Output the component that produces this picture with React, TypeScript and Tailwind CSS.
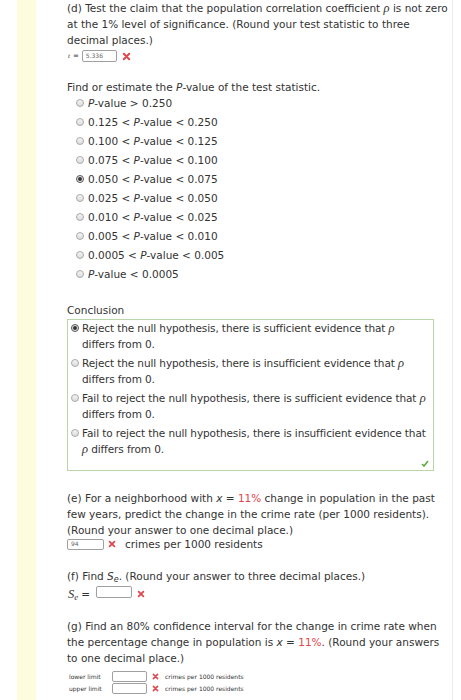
import React from "react";

const F = { fontFamily: '"DejaVu Sans", Verdana, sans-serif' };

function Radio({ checked }: { checked?: boolean }) {
  return checked ? (
    <span className="inline-flex h-[8px] w-[8px] shrink-0 items-center justify-center rounded-full border border-[#555] bg-[#e8e8e8]">
      <span className="h-[4px] w-[4px] rounded-full bg-[#333]" />
    </span>
  ) : (
    <span className="inline-block h-[8px] w-[8px] shrink-0 rounded-full border border-[#a9a9a9] bg-gradient-to-b from-[#f4f4f4] to-[#dcdcdc]" />
  );
}

function XMark({ size = 9 }: { size?: number }) {
  return (
    <svg width={size} height={size} viewBox="0 0 10 10" className="block shrink-0">
      <path d="M2 2 L8 8 M8 2 L2 8" stroke="#e0464b" strokeWidth="2.2" strokeLinecap="round" />
    </svg>
  );
}

function Rho() {
  return <span className="italic leading-none" style={{ fontFamily: '"Liberation Serif", serif', fontSize: "12.5px" }}>ρ</span>;
}

function P() {
  return <span className="italic">P</span>;
}

function Box({ w, val, h = 12 }: { w: number; val?: string; h?: number }) {
  return (
    <span
      className="inline-flex shrink-0 items-center rounded-[2px] border border-[#a0a0a0] bg-white pl-[3px] text-[6px] leading-none text-[#666]"
      style={{ width: w, height: h }}
    >
      {val}
    </span>
  );
}

const options: React.ReactNode[] = [
  <><P />-value &gt; 0.250</>,
  <>0.125 &lt; <P />-value &lt; 0.250</>,
  <>0.100 &lt; <P />-value &lt; 0.125</>,
  <>0.075 &lt; <P />-value &lt; 0.100</>,
  <>0.050 &lt; <P />-value &lt; 0.075</>,
  <>0.025 &lt; <P />-value &lt; 0.050</>,
  <>0.010 &lt; <P />-value &lt; 0.025</>,
  <>0.005 &lt; <P />-value &lt; 0.010</>,
  <>0.0005 &lt; <P />-value &lt; 0.005</>,
  <><P />-value &lt; 0.0005</>,
];

const conclusions: [React.ReactNode, React.ReactNode][] = [
  [<>Reject the null hypothesis, there is sufficient evidence that <Rho /></>, <>differs from 0.</>],
  [<>Reject the null hypothesis, there is insufficient evidence that <Rho /></>, <>differs from 0.</>],
  [<>Fail to reject the null hypothesis, there is sufficient evidence that <Rho /></>, <>differs from 0.</>],
  [<>Fail to reject the null hypothesis, there is insufficient evidence that</>, <><Rho /> differs from 0.</>],
];

export default function App() {
  return (
    <div className="flex h-[700px] w-[461px] overflow-hidden bg-white text-[10.5px] leading-[16px] text-[#333]" style={F}>
      <div className="w-[17px] shrink-0" />
      <div className="w-[19px] shrink-0 bg-[#fdfdde]" />
      <div className="w-[417px] shrink-0 border-r border-[#ececec] pl-[31px] pr-[4px]">
        <p>
          (d) Test the claim that the population correlation coefficient <Rho /> is not zero at the 1% level of significance. (Round your test statistic to three decimal places.)
        </p>
        <div className="mt-[2px] flex h-[12px] items-center gap-[3px] pl-[1px] text-[7px] leading-none">
          <span className="italic" style={{ fontFamily: '"Liberation Serif", serif' }}>t</span>
          <span>=</span>
          <Box w={35} val="5.336" />
          <span className="ml-[2px]"><XMark /></span>
        </div>

        <p className="mt-[17px]">Find or estimate the <P />-value of the test statistic.</p>
        <div className="flex flex-col gap-[3px] pl-[9px]">
          {options.map((o, i) => (
            <div key={i} className="flex h-[16px] items-center gap-[4px]">
              <Radio checked={i === 4} />
              <span>{o}</span>
            </div>
          ))}
        </div>

        <p className="mt-[20px]">Conclusion</p>
        <div className="relative mr-[14px] mt-[1px] flex flex-col gap-[3px] border border-[#b9d6a8] pb-[13px] pl-[3px]">
          {conclusions.map(([a, b], i) => (
            <div key={i} className="flex gap-[3px]">
              <span className="flex h-[16px] items-center"><Radio checked={i === 0} /></span>
              <span className="flex flex-col whitespace-nowrap tracking-[-0.1px]">
                <span>{a}</span>
                <span>{b}</span>
              </span>
            </div>
          ))}
          <svg width="8" height="7" viewBox="0 0 8 7" className="absolute bottom-[3px] right-[4px]">
            <path d="M1 4 L3 6 L7 1" stroke="#5cab3c" strokeWidth="1.6" fill="none" />
          </svg>
        </div>

        <p className="mt-[19px]">
          (e) For a neighborhood with <span className="italic">x</span> = <span className="text-[#e0464b]">11%</span> change in population in the past few years, predict the change in the crime rate (per 1000 residents). (Round your answer to one decimal place.)
        </p>
        <div className="flex h-[12px] items-center">
          <Box w={37} val="94" h={11} />
          <span className="ml-[4px]"><XMark size={8} /></span>
          <span className="ml-[9px]">crimes per 1000 residents</span>
        </div>

        <p className="mt-[18px]">
          (f) Find <span className="italic">S<sub className="text-[8px] leading-none">e</sub></span>. (Round your answer to three decimal places.)
        </p>
        <div className="mt-[2px] flex h-[16px] items-center">
          <span className="pl-[1px] italic text-[12.5px] leading-none" style={{ fontFamily: '"Liberation Serif", serif' }}>S<sub className="text-[9px] leading-none">e</sub></span>
          <span className="ml-[3px]">=</span>
          <span className="ml-[6px]"><Box w={36} h={12} /></span>
          <span className="ml-[5px]"><XMark size={8} /></span>
        </div>

        <p className="mt-[16px]">
          (g) Find an 80% confidence interval for the change in crime rate when the percentage change in population is <span className="italic">x</span> = <span className="text-[#e0464b]">11%</span>. (Round your answers to one decimal place.)
        </p>
        <div className="mt-[5px] flex flex-col gap-[1px] text-[6px] leading-none">
          {["lower limit", "upper limit"].map((l) => (
            <div key={l} className="flex h-[11px] items-center">
              <span className="w-[45px] pl-[2px]">{l}</span>
              <Box w={35} h={11} />
              <span className="ml-[5px]"><XMark size={7} /></span>
              <span className="ml-[6px]">crimes per 1000 residents</span>
            </div>
          ))}
        </div>
      </div>
    </div>
  );
}
